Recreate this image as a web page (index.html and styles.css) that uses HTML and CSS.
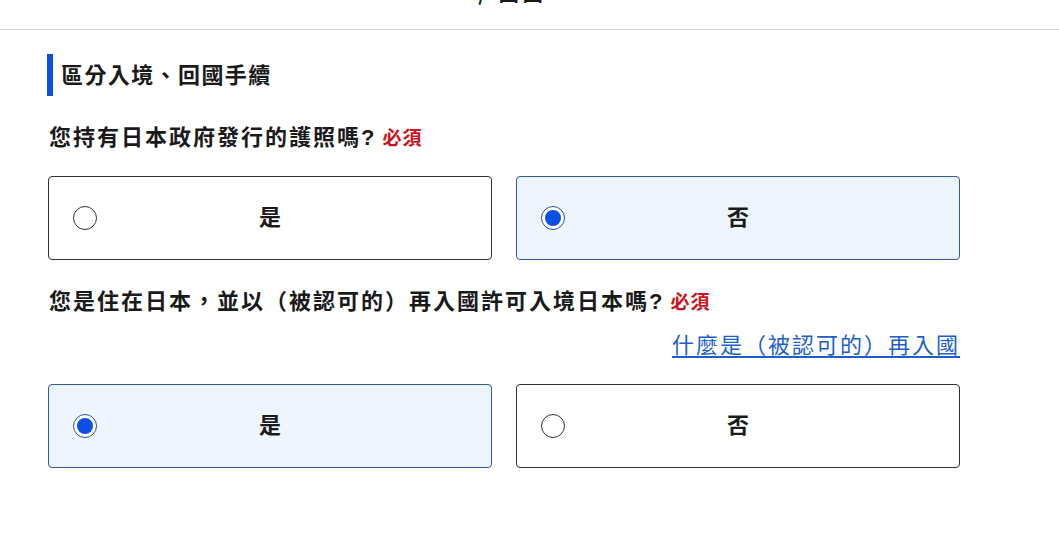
FILE: index.html
```html
<!DOCTYPE html>
<html lang="zh-Hant-TW">
<head>
<meta charset="utf-8">
<title>區分入境、回國手續</title>
<link rel="stylesheet" href="styles.css">
</head>
<body>
<header class="topbar"><span class="topbar-text">/ 回國</span></header>
<main class="content">
  <h2 class="section-title">區分入境、回國手續</h2>

  <p class="question">您持有日本政府發行的護照嗎<span class="qmark">?</span><span class="required">必須</span></p>
  <div class="options">
    <label class="option">
      <span class="radio"></span>
      <span class="option-label">是</span>
    </label>
    <label class="option selected">
      <span class="radio"><span class="dot"></span></span>
      <span class="option-label">否</span>
    </label>
  </div>

  <p class="question q2">您是住在日本，並以（被認可的）再入國許可入境日本嗎<span class="qmark">?</span><span class="required">必須</span></p>
  <div class="link-row"><a class="help-link" href="#">什麼是（被認可的）再入國</a></div>
  <div class="options">
    <label class="option selected">
      <span class="radio"><span class="dot"></span></span>
      <span class="option-label">是</span>
    </label>
    <label class="option">
      <span class="radio"></span>
      <span class="option-label">否</span>
    </label>
  </div>
</main>
</body>
</html>
```

FILE: styles.css
```css
* { box-sizing: border-box; }
html, body { margin: 0; padding: 0; background: #fff; }
body {
  font-family: "Noto Sans CJK TC", "Noto Sans", sans-serif;
  color: #1a1a1a;
  overflow: hidden;
}
.topbar {
  height: 30px;
  border-bottom: 1px solid #cfcfcf;
  text-align: center;
  padding-right: 34px;
  overflow: hidden;
}
.topbar-text {
  display: block;
  font-size: 20px;
  line-height: 20px;
  margin-top: -17px;
  letter-spacing: 4px;
  font-weight: 700;
}
.content {
  width: 960px;
  padding: 24px 0 0 47px;
}
.section-title {
  margin: 0;
  height: 42px;
  line-height: 38px;
  border-left: 6px solid #0a4fe6;
  padding-left: 8px;
  font-size: 22px;
  font-weight: 700;
  letter-spacing: 1.4px;
}
.question {
  margin: 24px 0 0 2px;
  font-size: 22px;
  line-height: 30px;
  font-weight: 700;
  letter-spacing: 2px;
}
.qmark {
  font-family: "Liberation Sans", Arial, sans-serif;
  font-size: 22px;
  letter-spacing: 0;
}
.question.q2 { margin-top: 24px; }
.required {
  color: #c9151e;
  font-size: 19px;
  letter-spacing: 1px;
  margin-left: 8px;
}
.options {
  display: grid;
  grid-template-columns: 444px 444px;
  gap: 24px;
  margin: 23px 0 0 1px;
}
.link-row + .options { margin-top: 23px; }
.option {
  display: grid;
  grid-template-columns: 24px 1fr 24px;
  align-items: center;
  height: 84px;
  padding: 0 24px;
  border: 1px solid #333;
  border-radius: 4px;
  background: #fff;
  cursor: pointer;
}
.option.selected {
  background: #eff5fd;
  border-color: #2f5a9c;
}
.radio {
  width: 24px;
  height: 24px;
  border: 1px solid #333;
  border-radius: 50%;
  background: #fff;
  display: flex;
  align-items: center;
  justify-content: center;
}
.selected .radio { border-color: #2a4f95; }
.dot {
  width: 16px;
  height: 16px;
  border-radius: 50%;
  background: #0a4fe6;
}
.option-label {
  text-align: center;
  font-size: 22px;
  font-weight: 700;
  line-height: 30px;
  margin-top: -6px;
}
.link-row {
  margin-top: 11px;
  text-align: right;
  line-height: 30px;
}
.help-link {
  font-size: 22px;
  letter-spacing: 2px;
  margin-right: 0;
  color: #1c5fcb;
  text-decoration: underline;
  text-underline-offset: 3px;
}
```
